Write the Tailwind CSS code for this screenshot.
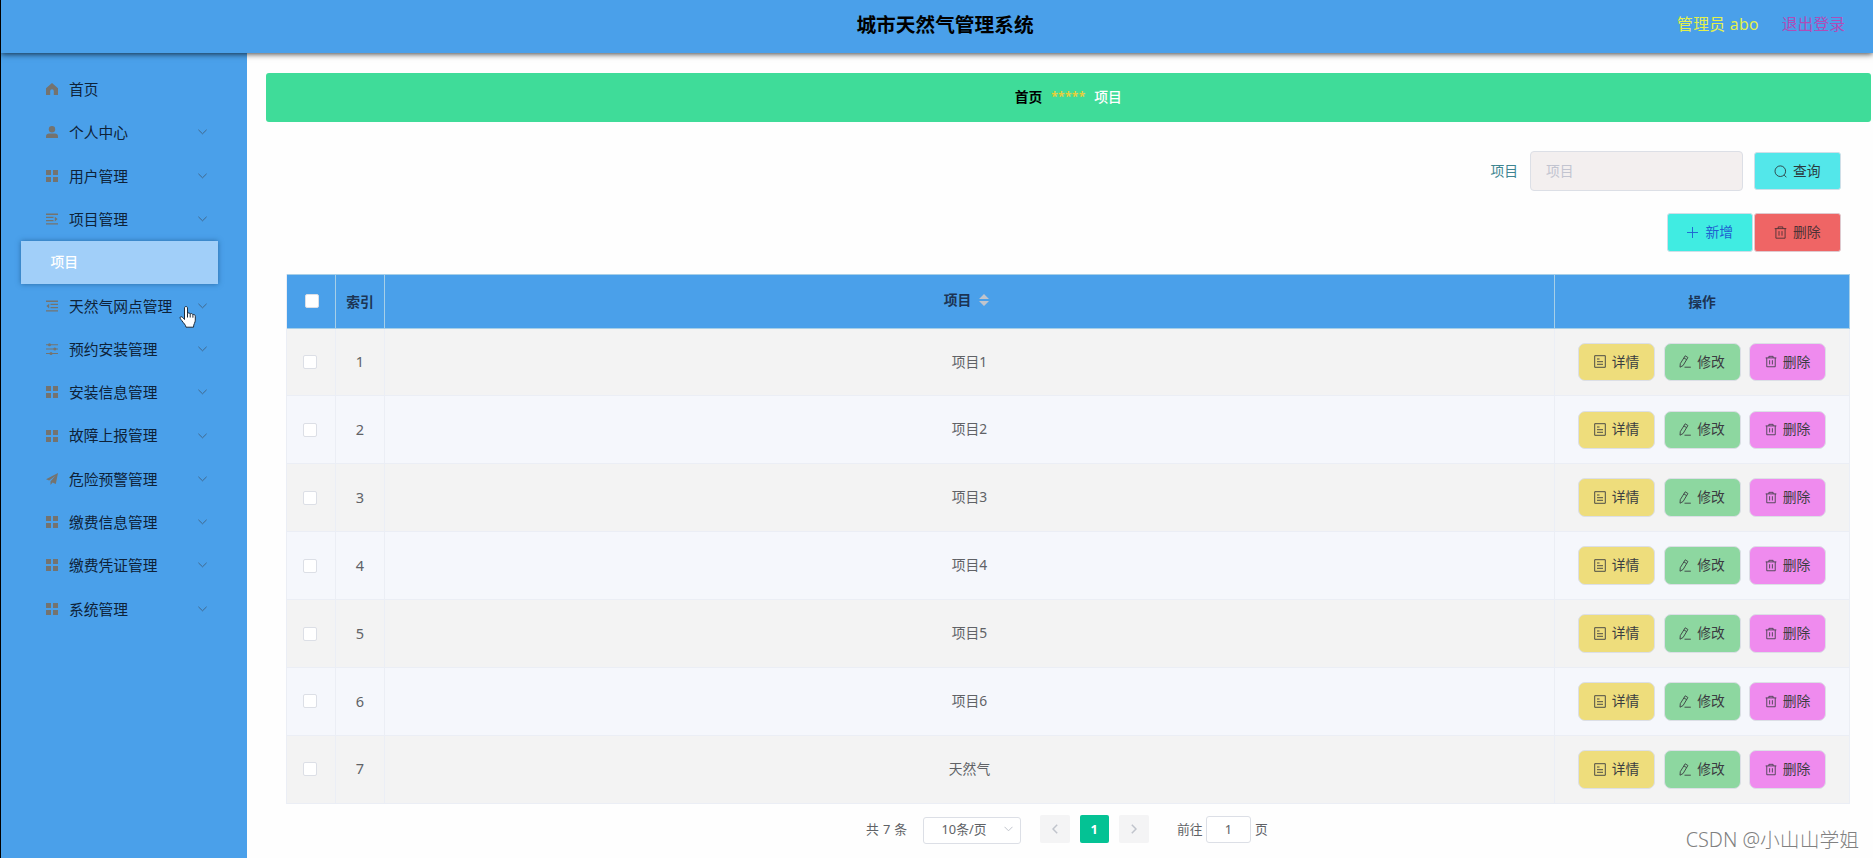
<!DOCTYPE html>
<html lang="zh-CN">
<head>
    <meta charset="UTF-8">
    <meta name="viewport" content="width=device-width, initial-scale=1.0">
    <title>城市天然气管理系统</title>
    <script src="https://cdn.jsdelivr.net/npm/@tailwindcss/browser@4"></script>
</head>
<body class="h-[858px] overflow-hidden bg-[#fefefe] font-['Noto_Sans','Noto_Sans_CJK_SC',sans-serif] text-[13.8px] text-[#606266]">
    <div class="relative flex h-[858px] flex-col border-l border-black">
        <!-- Header -->
        <header class="relative z-10 grid h-[53px] shrink-0 grid-cols-[1fr_auto_1fr] items-center bg-[#4aa0ea] pb-1 shadow-[0_1px_6px_rgba(0,0,0,0.75)]">
            <div></div>
            <h1 class="pl-4 text-[19.7px] font-bold leading-none text-black">城市天然气管理系统</h1>
            <div class="flex justify-end gap-[23px] pr-7 text-[15.8px] leading-none">
                <span class="tracking-[0.3px] text-[#e4f04a]">管理员 abo</span>
                <a class="text-[#b04cb8]">退出登录</a>
            </div>
        </header>

        <div class="flex min-h-0 flex-1">
            <!-- Sidebar -->
            <aside class="w-[246px] shrink-0 bg-[#4aa0ea] pt-[14.5px]">
                <ul id="menu"></ul>
            </aside>

            <main class="min-w-0 flex-1 pt-[19.5px] pl-[19px] pr-[2.5px]">
                <!-- Breadcrumb -->
                <div class="flex h-[49.5px] items-center justify-center gap-[9px] rounded-[3px] bg-[#3fdc99] font-bold">
                    <span class="text-black">首页</span>
                    <span class="w-[34px] text-[12px] tracking-[0.35px] text-[#e6cf3c]">*****</span>
                    <span class="font-medium text-white">项目</span>
                </div>

                <!-- Search -->
                <div class="mt-[29px] flex h-10 items-center justify-end pr-[30px]">
                    <label class="mr-[12px] text-[13.8px] text-[#3f8591]">项目</label>
                    <input type="text" placeholder="项目" class="mr-[11px] h-10 w-[213px] rounded border border-[#dcdfe6] bg-[#f3efef] px-[15px] pb-0.5 placeholder:text-[#c2c4d0]">
                    <button class="flex h-[38.5px] w-[86.5px] items-center justify-center gap-[6px] rounded-[3px] border border-[#cfdfe8] bg-[#53e7ea] text-[#2c3a3e]">
                        <svg class="h-[13px] w-[13px]" viewBox="0 0 13 13" fill="none" stroke="currentColor" stroke-width=".9"><circle cx="6.3" cy="6.2" r="5.3"/><path d="M10.2 10.1l2.2 2.2"/></svg>
                        查询
                    </button>
                </div>
                <div class="mt-[22px] flex h-[38.5px] justify-end gap-[1px] pr-[30px]">
                    <button class="flex w-[86.5px] items-center justify-center gap-[6px] rounded-[3px] border border-[#cfdfe8] bg-[#40ece2] text-[#1f5fd0]">
                        <svg class="h-[13px] w-[13px]" viewBox="0 0 13 13" fill="none" stroke="currentColor" stroke-width=".9"><path d="M6.5 1v11M1 6.5h11"/></svg>
                        新增
                    </button>
                    <button class="flex w-[86.5px] items-center justify-center gap-[6px] rounded-[3px] border border-[#dfc9cf] bg-[#ef6565] text-[#4c3236]">
                        <svg class="h-[13px] w-[13px]" viewBox="0 0 13 13" fill="none" stroke="currentColor" stroke-width=".9"><path d="M.7 2.6h11.6M4.2 2.6V.9h4.6v1.7M1.9 2.6v9.6h9.2V2.600M5 5.1v4.6M8 5.1v4.6"/></svg>
                        删除
                    </button>
                </div>

                <!-- Table -->
                <table class="mt-[22px] ml-[20px] w-[1564px] table-fixed border-separate border-spacing-0 border-l border-[#ebeef5] text-center">
                    <colgroup>
                        <col class="w-[49px]">
                        <col class="w-[49px]">
                        <col>
                        <col class="w-[295px]">
                    </colgroup>
                    <thead class="bg-[#4aa0ea] text-[#1c3454]">
                        <tr class="h-[55px]">
                            <th class="border-y border-r border-[#a6cfe8]"><span class="mx-auto block h-[14px] w-[14px] translate-x-[1px] rounded-[2px] border border-[#dcdfe6] bg-white"></span></th>
                            <th class="border-y border-r border-[#a6cfe8] pt-[2px]">索引</th>
                            <th class="border-y border-r border-[#a6cfe8]">
                                <div class="flex items-center justify-center gap-[8px] pr-[6px] pb-[2px]">
                                    项目
                                    <svg class="h-3 w-[10px]" viewBox="0 0 10 12" fill="#c0c4cc"><path d="M5 0l5 5H0zM5 12l5-5H0z"/></svg>
                                </div>
                            </th>
                            <th class="border-y border-r border-[#a6cfe8] pt-[2px]">操作</th>
                        </tr>
                    </thead>
                    <tbody id="rows"></tbody>
                </table>

                <!-- Pagination -->
                <div class="mt-[11.5px] flex h-7 items-center pl-[600px] text-[12.8px]">
                    <span class="w-[56.5px] tracking-[0.4px]">共 7 条</span>
                    <div class="mt-[2px] mr-[19.5px] flex h-[27px] w-[98px] items-center justify-between rounded-[3px] border border-[#dcdfe6] bg-white pr-[7px] pb-[2px] pl-[18px]">
                        10条/页
                        <svg class="h-[6px] w-[9px]" viewBox="0 0 9 6" fill="none" stroke="#c0c4cc"><path d="M.5.8l4 4 4-4"/></svg>
                    </div>
                    <button class="mr-[10px] flex h-[27.5px] w-[29.5px] items-center justify-center rounded-[2px] bg-[#f4f4f5]">
                        <svg class="h-[10px] w-[6px]" viewBox="0 0 6 10" fill="none" stroke="#c0c4cc" stroke-width="1.5"><path d="M5.2.8L1 5l4.2 4.2"/></svg>
                    </button>
                    <button class="mr-[10px] h-[27.5px] w-[29.5px] rounded-[2px] bg-[#04c294] font-bold text-white">1</button>
                    <button class="mr-[28.5px] flex h-[27.5px] w-[29.5px] items-center justify-center rounded-[2px] bg-[#f4f4f5]">
                        <svg class="h-[10px] w-[6px]" viewBox="0 0 6 10" fill="none" stroke="#c0c4cc" stroke-width="1.5"><path d="M.8.8L5 5 .8 9.2"/></svg>
                    </button>
                    <span class="w-[29px]">前往</span>
                    <input type="text" value="1" class="mr-1 h-[27px] w-[45px] rounded-[3px] border border-[#dcdfe6] bg-white text-center">
                    <span>页</span>
                </div>
            </main>
        </div>

        <!-- Cursor -->
        <svg class="absolute top-[306px] left-[178px] z-20 h-[22px] w-[18px]" viewBox="0 0 18 22" fill="#fff" stroke="#1c2b3c" stroke-linejoin="round">
            <path d="M5.5 13.5V2c0-2 3-2 3 0v5.5c.6-.9 2.4-.7 2.7.5.7-.8 2.4-.5 2.7.7.9-.5 2.4 0 2.4 1.5v4c0 2.5-1.8 3.8-1.8 7H7c-.2-2.4-2.500-4-4.200-6.600C2 13.500.4 12 1.300 11c1-1 2.700.5 4.200 2.500zM8.500 7.500v4M11.200 8v3.500M13.900 8.700v3"/>
        </svg>
        <div class="absolute right-[14px] bottom-[6px] text-[19.8px] leading-6 font-light whitespace-nowrap text-[#808080] text-shadow-[1px_1px_0_#ffffff]">CSDN @小山山学姐</div>
    </div>

    <script>
        const icons = {
            home: '<path d="M6 0L0 5.3V12h4.200V8a1.800 1.800 0 0 1 3.600 0v4H12V5.300z"/>',
            user: '<circle cx="6" cy="3.2" r="3.2"/><path d="M0 12V10.300C0 8.500 1.500 7.600 3 7.600h6c1.500 0 3 .9 3 2.700V12z"/>',
            grid: '<path d="M0 0h5v5H0zM7 0h5v5H7zM0 7h5v5H0zM7 7h5v5H7z"/>',
            unfold: '<path d="M0 .6h12v1.300H0zM0 3.800h7.500v1.300H0zM0 7h7.500v1.300H0zM0 10.200h12v1.300H0zM8.800 3.800L11.600 6.100 8.800 8.500z"/>',
            fold: '<path d="M0 .6h12v1.300H0zM4.500 3.800H12v1.300H4.500zM4.500 7H12v1.300H4.500zM0 10.200h12v1.300H0zM3.200 3.800L.4 6.100l2.800 2.400z"/>',
            sliders: '<path d="M0 1.200h12v1H0zM0 5.600h12v1H0zM0 10h12v1H0z"/><circle cx="3.5" cy="1.700" r="1.500"/><circle cx="8.800" cy="6.100" r="1.500"/><circle cx="5" cy="10.500" r="1.500"/>',
            plane: '<path d="M12 0L0 6.200l3.200 1.400L9.500 2.800 4.500 8.300V12l2.100-2.600 3.200 1.500z"/>'
        };

        const menu = [
            { text: '首页', icon: 'home' },
            { text: '个人中心', icon: 'user' },
            { text: '用户管理', icon: 'grid' },
            { text: '项目管理', icon: 'unfold', child: '项目' },
            { text: '天然气网点管理', icon: 'fold' },
            { text: '预约安装管理', icon: 'sliders' },
            { text: '安装信息管理', icon: 'grid' },
            { text: '故障上报管理', icon: 'grid' },
            { text: '危险预警管理', icon: 'plane' },
            { text: '缴费信息管理', icon: 'grid' },
            { text: '缴费凭证管理', icon: 'grid' },
            { text: '系统管理', icon: 'grid' }
        ];

        const projects = ['项目1', '项目2', '项目3', '项目4', '项目5', '项目6', '天然气'];

        function renderMenu() {
            document.getElementById('menu').innerHTML = menu.map((item, index) => `
                <li>
                    <div class="flex h-[43.3px] items-center pr-[40.5px] pl-[45px] text-[14.75px] text-[#0e2238]">
                        <svg class="mr-[11px] h-3 w-3" viewBox="0 0 12 12" fill="#74736f">${icons[item.icon]}</svg>
                        <span class="flex-1">${item.text}</span>
                        ${index > 0 ? '<svg class="h-[6px] w-[9px]" viewBox="0 0 9 6" fill="none" stroke="#41688c"><path d="M.4.8l4.1 4 4.1-4"/></svg>' : ''}
                    </div>
                    ${item.child ? `<div class="mr-[29px] ml-[19.5px] flex h-[43.3px] items-center bg-[#a1cff9] pl-[30px] font-medium text-white shadow-[0_0_5px_rgba(20,70,120,0.6)]">${item.child}</div>` : ''}
                </li>
            `).join('');
        }

        function renderRows() {
            document.getElementById('rows').innerHTML = projects.map((name, index) => `
                <tr class="h-[67.9px] bg-[#f3f3f3] even:bg-[#f5f7fc]">
                    <td class="border-r border-b border-[#ebeef5]"><span class="mx-auto block h-[14px] w-[14px] -translate-x-[1px] rounded-[2px] border border-[#dcdfe6] bg-white"></span></td>
                    <td class="border-r border-b border-[#ebeef5] text-[14.5px]">${index + 1}</td>
                    <td class="border-r border-b border-[#ebeef5]">${name}</td>
                    <td class="border-r border-b border-[#ebeef5]">
                        <div class="flex justify-center gap-[8.5px] text-[#3b3d42]">
                            <button class="flex h-[38.5px] w-[77px] items-center justify-center gap-[6px] rounded-[7px] border border-[#dcdfe6] bg-[#eedd7c]">
                                <svg class="h-[13px] w-[12px]" viewBox="0 0 12 13" fill="none" stroke="currentColor" stroke-width=".9"><path d="M.7.7h10.600v11.600H.7zM3 4h2.500M3 6.700h6M3 9.300h6"/></svg>
                                详情
                            </button>
                            <button class="flex h-[38.5px] w-[77px] items-center justify-center gap-[6px] rounded-[7px] border border-[#dcdfe6] bg-[#8dd7a0]">
                                <svg class="h-[13px] w-[12px]" viewBox="0 0 12 13" fill="none" stroke="currentColor" stroke-width=".9"><path d="M6.200.8l2.700 1.700-4.800 8-3.100 1.700.3-3.600zM4.900 2.900l2.700 1.700M5.500 12.200h6.300"/></svg>
                                修改
                            </button>
                            <button class="flex h-[38.5px] w-[77px] items-center justify-center gap-[6px] rounded-[7px] border border-[#dcdfe6] bg-[#ef8bee]">
                                <svg class="h-[13px] w-[12px]" viewBox="0 0 13 13" fill="none" stroke="currentColor" stroke-width=".9"><path d="M.7 2.600h11.600M4.200 2.600V.9h4.600v1.700M1.900 2.600v9.600h9.200V2.600M5 5.100v4.600M8 5.100v4.600"/></svg>
                                删除
                            </button>
                        </div>
                    </td>
                </tr>
            `).join('');
        }

        renderMenu();
        renderRows();
    </script>
</body>
</html>
